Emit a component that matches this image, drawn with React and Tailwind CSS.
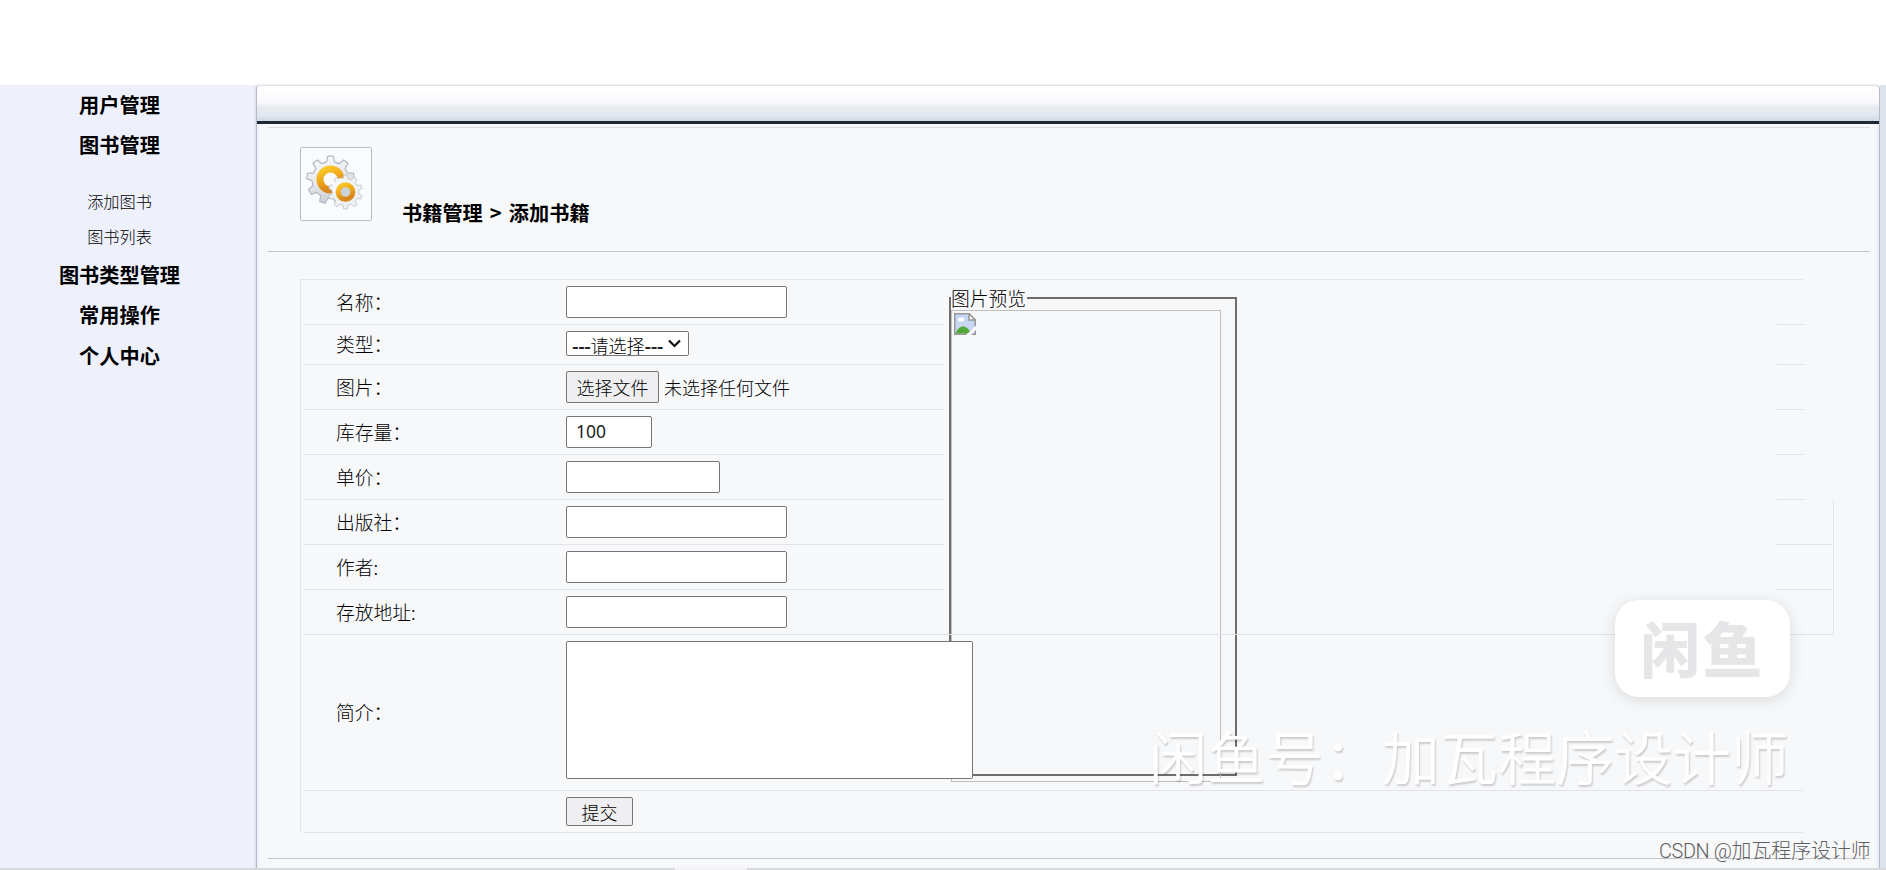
const CJK = 'font-["Noto_Sans_CJK_SC",sans-serif]';

const gear = (cx, cy, n, ro, ri) => {
  const pts = [];
  const step = (Math.PI * 2) / n;
  for (let i = 0; i < n; i++) {
    const a = i * step - Math.PI / 2;
    [[-0.3, ri], [-0.17, ro], [0.17, ro], [0.3, ri]].forEach(([o, r]) => {
      pts.push(`${(cx + r * Math.cos(a + o * step)).toFixed(2)},${(cy + r * Math.sin(a + o * step)).toFixed(2)}`);
    });
  }
  return pts.join(" ");
};

function GearIcon() {
  return (
    <svg width="70" height="72" viewBox="0 0 70 72">
      <defs>
        <linearGradient id="silver" x1="0.3" y1="0" x2="0.6" y2="1">
          <stop offset="0" stopColor="#f8f9fb" />
          <stop offset="0.5" stopColor="#e6e8ec" />
          <stop offset="1" stopColor="#c9cbd0" />
        </linearGradient>
        <linearGradient id="gold" x1="0" y1="0" x2="0.4" y2="1">
          <stop offset="0" stopColor="#fbcb28" />
          <stop offset="0.5" stopColor="#f0aa1b" />
          <stop offset="1" stopColor="#d8861e" />
        </linearGradient>
      </defs>
      <polygon points={gear(29.5, 32, 9, 24, 18.5)} fill="url(#silver)" stroke="#b4bac4" strokeWidth="1.2" strokeLinejoin="round" />
      <circle cx="29.5" cy="31.5" r="10.5" fill="#fbfbfc" stroke="url(#gold)" strokeWidth="7" />
      <polygon points={gear(44.5, 44, 10, 17, 13.5)} fill="#f0f1f4" stroke="#c0c5ce" strokeWidth="0.9" strokeLinejoin="round" />
      <path d="M31 43L32 36L39 30L46 32L38 36L34 44Z" fill="#f5f6f8" />
      <circle cx="44.5" cy="44" r="7.3" fill="#c9d3da" stroke="url(#gold)" strokeWidth="5" />
    </svg>
  );
}

function BrokenImage() {
  return (
    <svg width="22" height="22" viewBox="0 0 22 22" className="block">
      <path d="M0.75 0.75H15L21.25 7V21.25H0.75Z" fill="#c6d8f3" stroke="#979797" strokeWidth="1.5" />
      <path d="M1.5 20.5C5 11 13 11 17 20.5Z" fill="#52a838" />
      <ellipse cx="7" cy="6.5" rx="3.2" ry="2" fill="#fff" />
      <path d="M15 0.75V7H21.25Z" fill="#fff" stroke="#979797" strokeWidth="1.5" />
      <path d="M12 22L22 12.5V17L17 22Z" fill="#f7f8fb" />
    </svg>
  );
}

const Box = ({ className = "", children }) => (
  <div className={`flex items-center rounded-[2px] border border-[#767676] bg-white text-[18px] text-[#222] ${className}`}>{children}</div>
);

function Row({ label, h = "h-[45px]", tail = "w-[27px]", full = "", children }) {
  return (
    <div className={`flex ${h} ${full || "justify-between"}`}>
      <div className={`flex w-[640px] shrink-0 items-center ${full ? "" : "border-b border-[#e2e3e6]"}`}>
        <div className="w-[262px] shrink-0 pl-[32px] text-[18.8px] font-light leading-none text-black">{label}</div>
        {children}
      </div>
      {!full && (
        <div className="w-[57px] shrink-0">
          <div className={`h-full border-b border-[#e2e3e6] ${tail}`} />
        </div>
      )}
    </div>
  );
}

function Preview() {
  return (
    <div className="absolute left-[649px] top-[18px] h-[479px] w-[288px] border-2 border-[#6d6d6d]">
      <div className="absolute -top-[14px] left-0 bg-[#f7f8fa] pr-px text-[18.8px] font-light leading-[25px] text-black">图片预览</div>
      <div className="absolute left-0 top-[11px] h-[472px] w-[270px] border border-[#bfbfbf] p-0.5">
        <BrokenImage />
      </div>
    </div>
  );
}

const Heading = ({ children, className = "" }) => (
  <div className={`text-[20.2px] font-bold leading-[40.4px] text-black ${className}`}>{children}</div>
);

export default function App() {
  return (
    <div className={`relative flex h-[870px] w-[1886px] flex-col overflow-hidden bg-white ${CJK}`}>
      <div className="h-[85px] shrink-0" />
      <div className="flex h-[783px] shrink-0">
        <aside className="flex w-[256px] shrink-0 flex-col items-center bg-[#eef1fc] pr-[17px] text-center">
          <Heading>用户管理</Heading>
          <Heading>图书管理</Heading>
          <div className="pb-px pt-[18px] text-[16.2px] font-light leading-[35px] text-black">
            <div>添加图书</div>
            <div>图书列表</div>
          </div>
          <Heading>图书类型管理</Heading>
          <Heading>常用操作</Heading>
          <Heading>个人中心</Heading>
        </aside>
        <main className="flex w-[1624px] shrink-0 flex-col rounded-t border-l border-r border-[#b4b9c6] bg-[#f7f8fa] shadow-[inset_3px_0_3px_-1px_#eceffa,inset_-3px_0_3px_-1px_#e6eaf6,-1px_0_2px_#d5d9e6]">
          <div className="h-[36px] shrink-0 rounded-t border-t border-[#dcdfe6] bg-[linear-gradient(to_bottom,#ffffff_0%,#fafafd_46%,#e9ecf0_60%,#e2e8f0_82%,#cfd9e1_100%)]" />
          <div className="h-[3px] shrink-0 bg-[#1c2a36]" />
          <div className="flex flex-col pl-[11px] pr-[9px]">
            <div className="h-[3px]" />
            <div className="flex h-[125px] border-y border-b-[#c3c5c9] border-t-[#d9dfe0] pl-[32px] pt-[19px]">
              <div className="h-[74px] w-[72px] rounded-[2px] border border-[#bbbdc1] bg-[#fafbfc]">
                <GearIcon />
              </div>
              <div className="ml-[30px] mt-[52px] text-[20.2px] font-bold leading-[28px] text-black [word-spacing:2.5px]">书籍管理 &gt; 添加书籍</div>
            </div>
            <div className="h-[27px]" />
            <div className="relative ml-[32px] h-[554px] w-[1534px]">
              <div className="absolute left-0 top-0 h-full w-[1503px] border-l border-t border-[#e4e5e8]" />
              <Preview />
              <div className="relative flex flex-col pl-[4px] pt-px">
                <Row label="名称："><Box className="h-[32px] w-[221px]" /></Row>
                <Row label="类型：" h="h-[40px]">
                  <Box className="mb-[2px] h-[25px] w-[123px] overflow-hidden pl-[5px] pt-[2px] leading-none">
                    <span className="font-bold tracking-[-0.5px]">---</span><span className="font-light text-black">请选择</span><span className="font-bold tracking-[-0.5px]">---</span>
                    <svg className="mb-[3px] ml-[5px] shrink-0" width="13" height="9" viewBox="0 0 13 9"><path d="M1 1.5L6.5 7L12 1.5" fill="none" stroke="#111" strokeWidth="2.2" /></svg>
                  </Box>
                </Row>
                <Row label="图片：">
                  <Box className="h-[32px] w-[93px] justify-center !bg-[#efeff1] font-light !text-black">选择文件</Box>
                  <span className="pl-[5px] text-[18px] font-light text-black">未选择任何文件</span>
                </Row>
                <Row label="库存量："><Box className='h-[32px] w-[86px] pb-px pl-[9px] font-["Noto_Sans",sans-serif] !text-[17.5px]'>100</Box></Row>
                <Row label="单价："><Box className="h-[32px] w-[154px]" /></Row>
                <div className="flex flex-col border-r border-[#e2e3e6]">
                  <Row label="出版社：" tail="w-[56px]"><Box className="h-[32px] w-[221px]" /></Row>
                  <Row label="作者:" tail="w-[56px]"><Box className="h-[32px] w-[221px]" /></Row>
                  <Row label="存放地址:" full="border-b border-[#e2e3e6]"><Box className="h-[32px] w-[221px]" /></Row>
                </div>
                <Row label="简介：" h="h-[156px] w-[1499px]" full="border-b border-[#e2e3e6]">
                  <Box className="mb-[5px] h-[138px] w-[407px] shrink-0" />
                </Row>
                <Row label="" h="h-[42px] w-[1499px]" full="border-b border-[#e2e3e6]">
                  <Box className="h-[29px] w-[67px] justify-center !bg-[#efeff1] pt-px font-light !text-black">提交</Box>
                </Row>
              </div>
            </div>
            <div className="h-[26px] border-b border-[#c3c5c9]" />
          </div>
        </main>
        <div className="grow bg-[#dde4ec]" />
      </div>
      <div className="flex h-[2px] shrink-0 bg-[#d9dade]">
        <div className="ml-[675px] w-[72px] bg-[#f3f3f5]" />
      </div>
      <div className="absolute left-[1615px] top-[600px] flex h-[97px] w-[175px] items-center justify-center rounded-[24px] bg-white pb-1 text-[60px] font-black leading-none tracking-[2px] text-[#e6e6e8] shadow-[0_3px_16px_rgba(0,0,0,0.12)]">闲鱼</div>
      <div className="absolute left-[1149px] top-[720px] whitespace-nowrap text-[58.2px] font-[350] leading-[70px] text-white [text-shadow:1px_2px_2px_rgba(0,0,0,0.18)]">闲鱼号：加瓦程序设计师</div>
      <div className="absolute left-[1659px] top-[837px] whitespace-nowrap text-[19.9px] font-light leading-[26px] text-[#606060]"><span className='font-["Roboto",sans-serif] font-light tracking-[-0.4px]'>CSDN @</span>加瓦程序设计师</div>
    </div>
  );
}
